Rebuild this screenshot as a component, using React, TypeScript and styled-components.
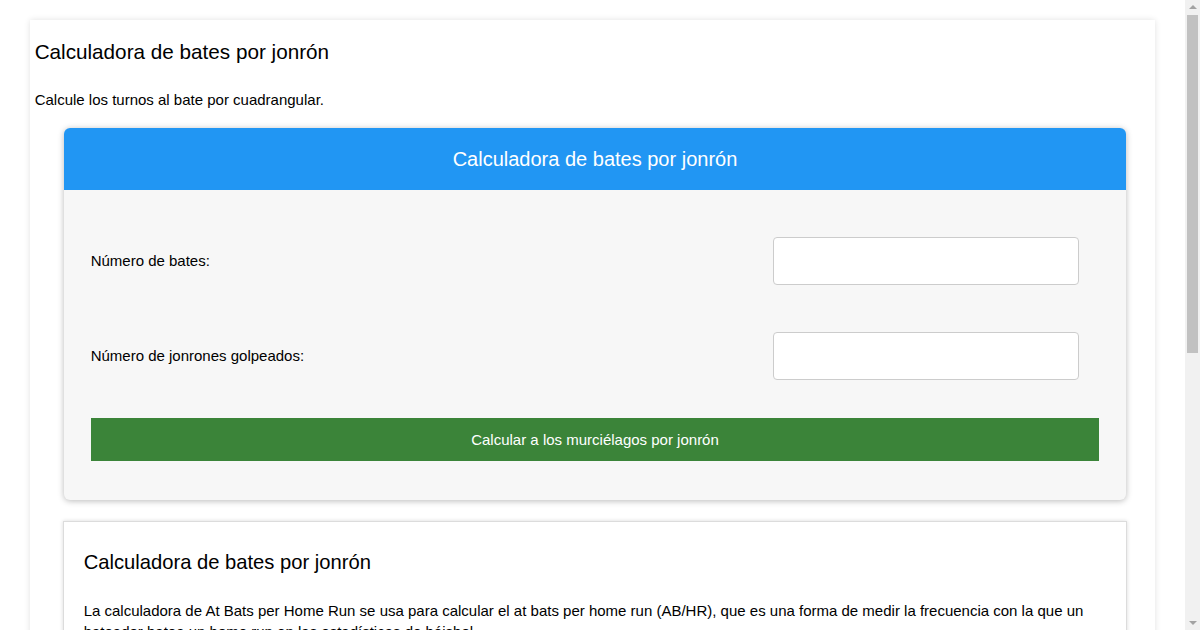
import styled, { createGlobalStyle } from "styled-components";

const GlobalStyle = createGlobalStyle`
  html, body {
    margin: 0;
    padding: 0;
    background: #ffffff;
    font-family: "Liberation Sans", Arial, sans-serif;
    color: #000;
  }
  body {
    padding-right: 15px;
  }
`;

// classic browser scrollbar as seen in the screenshot
const ScrollTrack = styled.div`
  position: fixed;
  top: 0;
  right: 0;
  width: 15px;
  height: 100vh;
  background: #f1f1f1;
  display: flex;
  flex-direction: column;
  align-items: center;
`;

const ScrollArrow = styled.div<{ $down?: boolean }>`
  width: 0;
  height: 0;
  margin: ${(p) => (p.$down ? "auto 0 5px" : "5px 0 0")};
  border-left: 4px solid transparent;
  border-right: 4px solid transparent;
  ${(p) =>
    p.$down ? "border-top: 4px solid #a3a3a3;" : "border-bottom: 4px solid #a3a3a3;"}
`;

const ScrollThumb = styled.div`
  width: 11px;
  height: 338px;
  margin-top: 6px;
  background: #c1c1c1;
`;

const Page = styled.div`
  width: 95%;
  margin: 20px auto 40px;
  padding: 0 5px 30px;
  box-sizing: border-box;
  background: #fff;
  box-shadow: 0 0 6px rgba(0, 0, 0, 0.12);
`;

const PageTitle = styled.h1`
  font-size: 20.7px;
  font-weight: 400;
  margin: 0;
  padding: 20px 0 0;
  line-height: 23px;
`;

const Lead = styled.p`
  font-size: 15px;
  margin: 27px 0 0;
  line-height: 20px;
`;

const Card = styled.section`
  margin: 18px 24px 0 29px;
  border-radius: 6px;
  overflow: hidden;
  background: #f7f7f7;
  box-shadow: 0 1px 6px rgba(0, 0, 0, 0.28);
`;

const CardHeader = styled.header`
  height: 62px;
  background: #2196f3;
  color: #fff;
  display: flex;
  align-items: center;
  justify-content: center;
  font-size: 20px;
`;

const CardBody = styled.div`
  padding: 23px 27px 39px;
`;

const Row = styled.div`
  height: 95px;
  display: grid;
  grid-template-columns: 1fr 306px;
  align-items: center;
  padding-right: 20px;
`;

const Label = styled.label`
  font-size: 15px;
`;

const Input = styled.input`
  box-sizing: border-box;
  width: 306px;
  height: 48px;
  border: 1px solid #cccccc;
  border-radius: 4px;
  background: #fff;
  font-size: 15px;
  padding: 0 10px;
`;

const Button = styled.button`
  display: block;
  width: 100%;
  height: 43px;
  margin-top: 15px;
  border: none;
  background: #3b8439;
  color: #fff;
  font-family: "Liberation Sans", Arial, sans-serif;
  font-size: 15px;
  cursor: pointer;
`;

const InfoCard = styled.section`
  margin: 21px 23px 0 28px;
  background: #fff;
  border: 1px solid #dcdcdc;
  box-shadow: 0 0 4px rgba(0, 0, 0, 0.15);
  padding: 20px 20px 20px;
`;

const InfoTitle = styled.h2`
  font-size: 20.2px;
  font-weight: 400;
  margin: 8px 0 0;
  line-height: 24px;
`;

const InfoText = styled.p`
  font-size: 15px;
  line-height: 21px;
  margin: 26px 0 0;
`;

export default function App() {
  return (
    <>
      <GlobalStyle />
      <Page>
        <PageTitle>Calculadora de bates por jonrón</PageTitle>
        <Lead>Calcule los turnos al bate por cuadrangular.</Lead>
        <Card>
          <CardHeader>Calculadora de bates por jonrón</CardHeader>
          <CardBody>
            <Row>
              <Label htmlFor="ab">Número de bates:</Label>
              <Input id="ab" type="text" />
            </Row>
            <Row>
              <Label htmlFor="hr">Número de jonrones golpeados:</Label>
              <Input id="hr" type="text" />
            </Row>
            <Button type="button">Calcular a los murciélagos por jonrón</Button>
          </CardBody>
        </Card>
        <InfoCard>
          <InfoTitle>Calculadora de bates por jonrón</InfoTitle>
          <InfoText>
            La calculadora de At Bats per Home Run se usa para calcular el at
            bats per home run (AB/HR), que es una forma de medir la frecuencia
            con la que un bateador batea un home run en las estadísticas de
            béisbol.
          </InfoText>
          <InfoText>
            Para usar la calculadora, ingrese el número de turnos al bate y el
            número de jonrones golpeados, luego presione el botón para obtener
            el resultado.
          </InfoText>
        </InfoCard>
      </Page>
      <ScrollTrack aria-hidden="true">
        <ScrollArrow />
        <ScrollThumb />
        <ScrollArrow $down />
      </ScrollTrack>
    </>
  );
}
